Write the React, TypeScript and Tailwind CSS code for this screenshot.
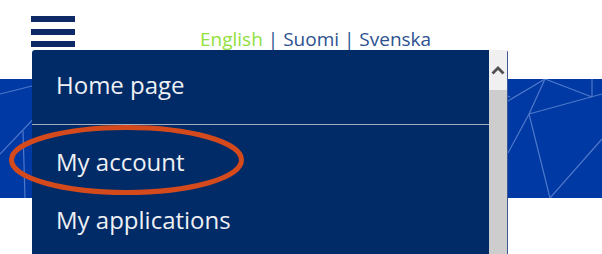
import React from "react";

const menuItems = ["My account", "My applications"];

const BannerLines = () => (
  <svg className="h-full w-full" viewBox="0 0 602 119" fill="none">
    <g stroke="#5c84d2" strokeWidth="1.2" opacity="0.85">
      <line x1="0" y1="15" x2="40" y2="5" />
      <line x1="0" y1="75" x2="40" y2="33" />
      <line x1="23" y1="52" x2="25" y2="119" />
      <line x1="466" y1="0" x2="508" y2="22" />
      <line x1="466" y1="0" x2="450" y2="35" />
      <line x1="450" y1="35" x2="508" y2="18" />
      <line x1="466" y1="0" x2="510" y2="18" />
      <line x1="545" y1="0" x2="592" y2="18" />
      <line x1="545" y1="0" x2="508" y2="22" />
      <line x1="592" y1="0" x2="592" y2="18" />
      <line x1="545" y1="0" x2="529" y2="35" />
      <line x1="529" y1="35" x2="602" y2="15" />
      <line x1="529" y1="35" x2="508" y2="74" />
      <line x1="529" y1="35" x2="550" y2="119" />
      <line x1="550" y1="119" x2="602" y2="60" />
    </g>
  </svg>
);

const App = () => {
  return (
    <div className="relative w-[602px] h-[254px] overflow-hidden bg-white font-['Open_Sans',sans-serif]">
      <header className="flex h-[79px]">
        <div className="ml-[31px] mt-[16px] flex flex-col gap-[6.5px]">
          <span className="block h-[6px] w-[44px] bg-[#0d2a66]" />
          <span className="block h-[6px] w-[44px] bg-[#0d2a66]" />
          <span className="block h-[6px] w-[44px] bg-[#0d2a66]" />
        </div>
        <div className="ml-[125px] mt-[26px] text-[19px] leading-[26px] text-[#2d5190]">
          <span className="text-[#8fe03b]">English</span> | Suomi | Svenska
        </div>
      </header>

      <div className="h-[119px] bg-[#0039a3]">
        <BannerLines />
      </div>

      <nav className="absolute left-[32px] top-[50px] bottom-0 flex w-[476px] rounded-t-[3px] border-r border-[#3b5891] bg-[#002b67]">
        <div className="flex-1 text-[24px] leading-[32px] text-[#eef0f4]">
          <div className="px-[24px] pt-[19px] pb-[23px]">Home page</div>
          <div className="h-px bg-[#a3adc2]" />
          <div className="flex flex-col gap-[26px] px-[24px] pt-[21px]">
            {menuItems.map((item) => (
              <div key={item}>{item}</div>
            ))}
          </div>
        </div>
        <div className="flex w-[18px] flex-col">
          <div className="flex h-[40px] items-center justify-center bg-[#f0f0f0]">
            <svg width="14" height="9" viewBox="0 0 14 9" fill="none">
              <path d="M1.5 7.5 L7 2 L12.5 7.5" stroke="#505050" strokeWidth="2.8" />
            </svg>
          </div>
          <div className="flex-1 bg-[#cdcdcd]" />
        </div>
      </nav>

      <svg className="pointer-events-none absolute left-0 top-0" width="602" height="254">
        <ellipse cx="126.5" cy="160" rx="115" ry="32.5" fill="none" stroke="#d44a1c" strokeWidth="5" />
      </svg>
    </div>
  );
};

export default App;
